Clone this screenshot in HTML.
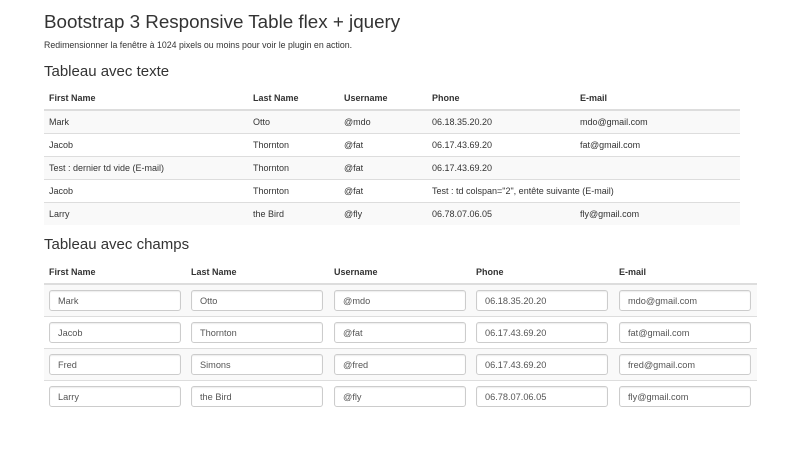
<!DOCTYPE html>
<html><head><meta charset="utf-8"><style>
*{box-sizing:border-box;margin:0;padding:0}
body{width:800px;height:450px;background:#fff;font-family:"Liberation Sans",sans-serif;color:#333;position:relative;overflow:hidden}
.a{position:absolute;white-space:nowrap}
h1{position:absolute;left:44px;top:11px;font-size:18.8px;font-weight:normal}
.sub{left:44px;top:40px;font-size:8.8px}
h3{position:absolute;left:44px;top:63px;font-size:15px;font-weight:normal}
.row{position:absolute;left:44px;border-top:1px solid #ddd}
.s{background:#f9f9f9}
.th{font-weight:bold;font-size:9px}
.td{font-size:9px}
.inp{position:absolute;width:132px;height:21px;border:1px solid #ccc;border-radius:3px;background:#fff;font-size:9.2px;color:#555;padding:5px 8px;box-shadow:inset 0 1px 1px rgba(0,0,0,.075)}
</style></head><body>
<h1>Bootstrap 3 Responsive Table flex + jquery</h1>
<div class="a sub">Redimensionner la fenêtre à 1024 pixels ou moins pour voir le plugin en action.</div>
<h3>Tableau avec texte</h3>
<div class="row" style="top:109px;width:696px;height:2px;background:#ddd;border:none"></div>
<div class="row s" style="top:111px;width:696px;height:22px;border:none"></div>
<div class="row" style="top:133px;width:696px;height:23px"></div>
<div class="row s" style="top:156px;width:696px;height:23px"></div>
<div class="row" style="top:179px;width:696px;height:23px"></div>
<div class="row s" style="top:202px;width:696px;height:23px"></div>
<div class="a th" style="left:49px;top:93px">First Name</div>
<div class="a th" style="left:253px;top:93px">Last Name</div>
<div class="a th" style="left:344px;top:93px">Username</div>
<div class="a th" style="left:432px;top:93px">Phone</div>
<div class="a th" style="left:580px;top:93px">E-mail</div>
<div class="a td" style="left:49px;top:117px">Mark</div><div class="a td" style="left:253px;top:117px">Otto</div><div class="a td" style="left:344px;top:117px">@mdo</div><div class="a td" style="left:432px;top:117px">06.18.35.20.20</div><div class="a td" style="left:580px;top:117px">mdo@gmail.com</div>
<div class="a td" style="left:49px;top:140px">Jacob</div><div class="a td" style="left:253px;top:140px">Thornton</div><div class="a td" style="left:344px;top:140px">@fat</div><div class="a td" style="left:432px;top:140px">06.17.43.69.20</div><div class="a td" style="left:580px;top:140px">fat@gmail.com</div>
<div class="a td" style="left:49px;top:163px">Test : dernier td vide (E-mail)</div><div class="a td" style="left:253px;top:163px">Thornton</div><div class="a td" style="left:344px;top:163px">@fat</div><div class="a td" style="left:432px;top:163px">06.17.43.69.20</div>
<div class="a td" style="left:49px;top:186px">Jacob</div><div class="a td" style="left:253px;top:186px">Thornton</div><div class="a td" style="left:344px;top:186px">@fat</div><div class="a td" style="left:432px;top:186px">Test : td colspan="2", entête suivante (E-mail)</div>
<div class="a td" style="left:49px;top:209px">Larry</div><div class="a td" style="left:253px;top:209px">the Bird</div><div class="a td" style="left:344px;top:209px">@fly</div><div class="a td" style="left:432px;top:209px">06.78.07.06.05</div><div class="a td" style="left:580px;top:209px">fly@gmail.com</div>

<h3 style="top:236px">Tableau avec champs</h3>
<div class="row" style="top:283px;width:713px;height:2px;background:#ddd;border:none"></div>
<div class="row s" style="top:285px;width:713px;height:31px;border:none"></div>
<div class="row" style="top:316px;width:713px;height:32px"></div>
<div class="row s" style="top:348px;width:713px;height:32px"></div>
<div class="row" style="top:380px;width:713px;height:32px"></div>
<div class="a th" style="left:49px;top:267px">First Name</div>
<div class="a th" style="left:191px;top:267px">Last Name</div>
<div class="a th" style="left:334px;top:267px">Username</div>
<div class="a th" style="left:476px;top:267px">Phone</div>
<div class="a th" style="left:619px;top:267px">E-mail</div>

<div class="inp" style="left:49px;top:290px">Mark</div><div class="inp" style="left:191px;top:290px">Otto</div><div class="inp" style="left:334px;top:290px">@mdo</div><div class="inp" style="left:476px;top:290px">06.18.35.20.20</div><div class="inp" style="left:619px;top:290px">mdo@gmail.com</div>
<div class="inp" style="left:49px;top:322px">Jacob</div><div class="inp" style="left:191px;top:322px">Thornton</div><div class="inp" style="left:334px;top:322px">@fat</div><div class="inp" style="left:476px;top:322px">06.17.43.69.20</div><div class="inp" style="left:619px;top:322px">fat@gmail.com</div>
<div class="inp" style="left:49px;top:354px">Fred</div><div class="inp" style="left:191px;top:354px">Simons</div><div class="inp" style="left:334px;top:354px">@fred</div><div class="inp" style="left:476px;top:354px">06.17.43.69.20</div><div class="inp" style="left:619px;top:354px">fred@gmail.com</div>
<div class="inp" style="left:49px;top:386px">Larry</div><div class="inp" style="left:191px;top:386px">the Bird</div><div class="inp" style="left:334px;top:386px">@fly</div><div class="inp" style="left:476px;top:386px">06.78.07.06.05</div><div class="inp" style="left:619px;top:386px">fly@gmail.com</div>
</body></html>
